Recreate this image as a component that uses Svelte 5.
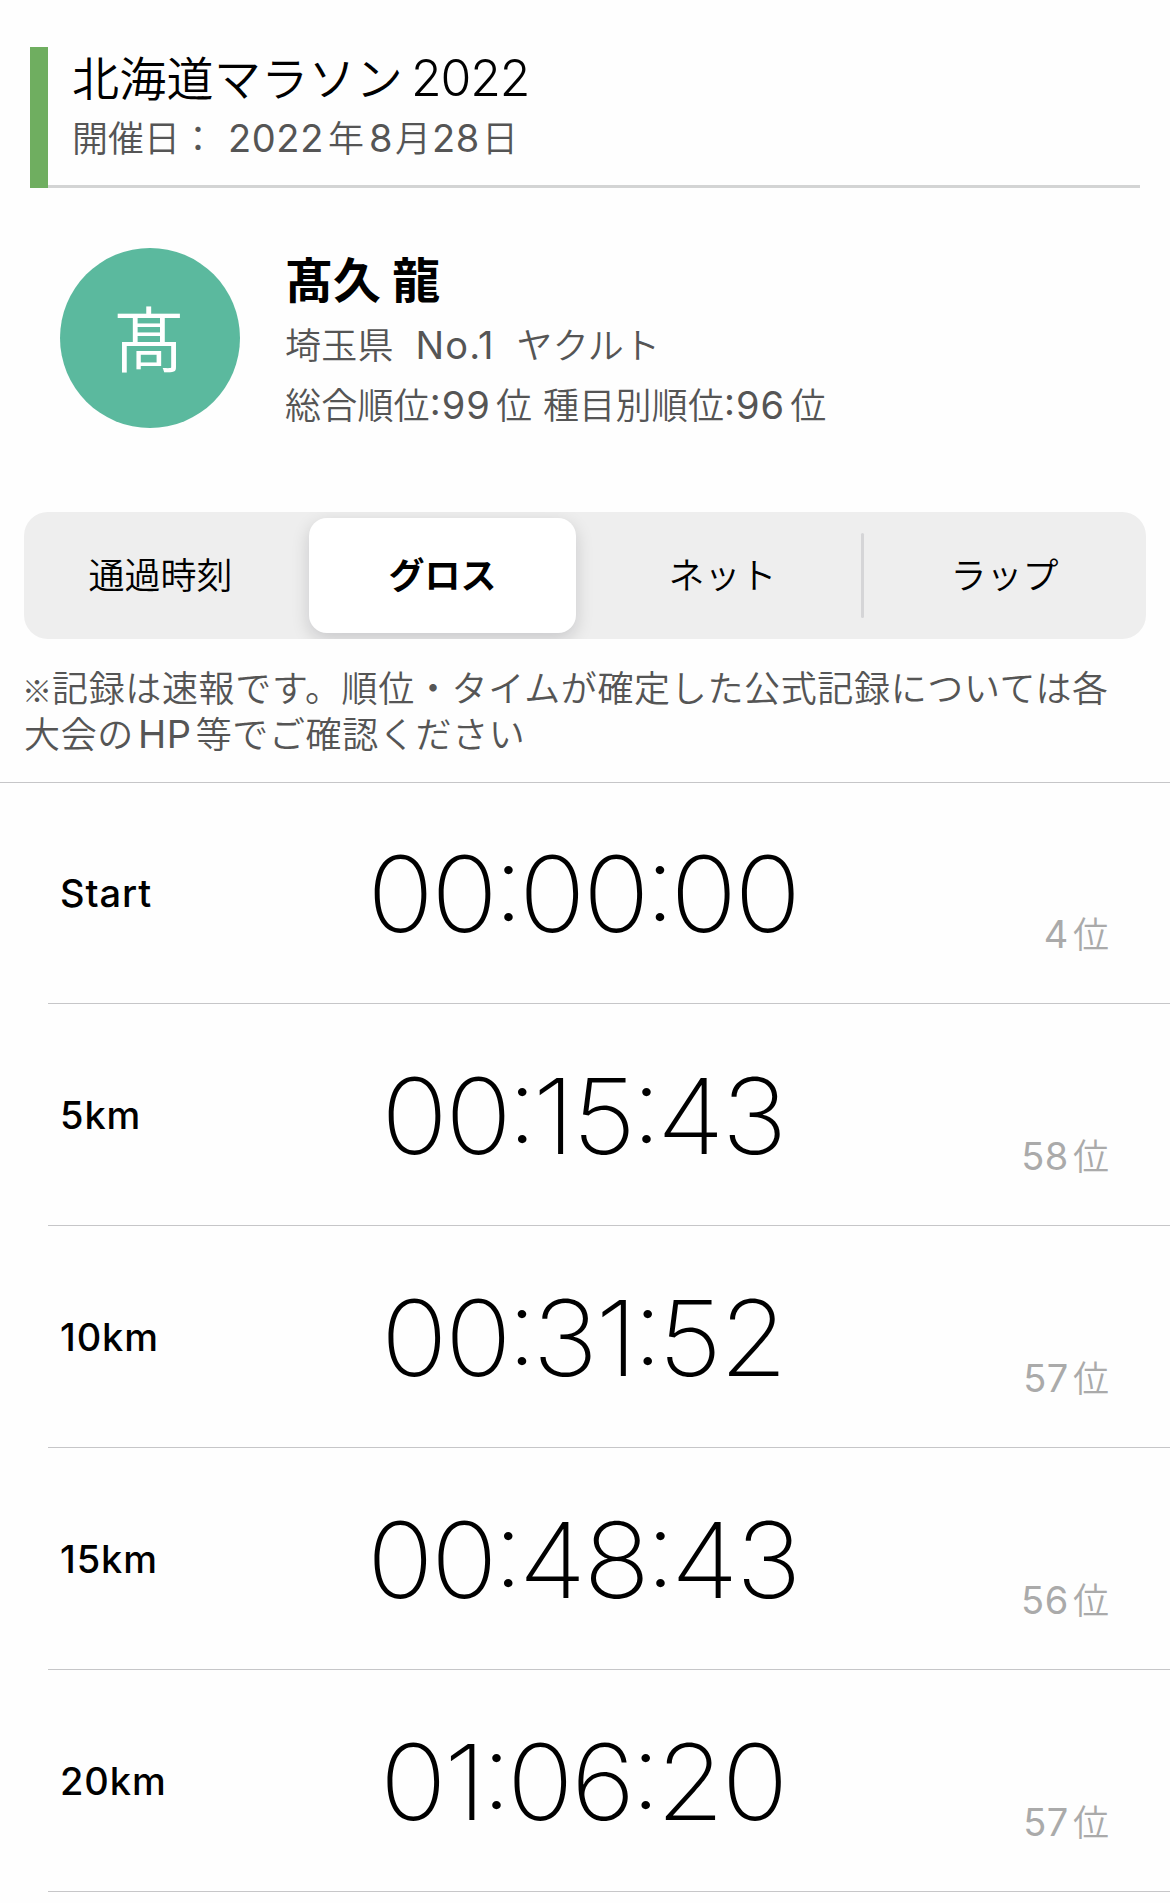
<script lang="ts">
  type Split = {
    point: string;
    time: string;
    rank: number;
  };

  const tabs = ['通過時刻', 'グロス', 'ネット', 'ラップ'];
  let selected = $state(1);

  const splits: Split[] = [
    { point: 'Start', time: '00:00:00', rank: 4 },
    { point: '5km', time: '00:15:43', rank: 58 },
    { point: '10km', time: '00:31:52', rank: 57 },
    { point: '15km', time: '00:48:43', rank: 56 },
    { point: '20km', time: '01:06:20', rank: 57 }
  ];

  // a divider only shows between two unselected tabs
  function hasDivider(i: number) {
    return i !== selected && i - 1 !== selected;
  }
</script>

<div class="page">
  <header class="event">
    <h1>北海道マラソン<span class="num">2022</span></h1>
    <p class="event-date">開催日：<span class="num year">2022</span>年<span class="num month">8</span>月<span class="num day">28</span>日</p>
  </header>

  <section class="runner">
    <div class="avatar">髙</div>
    <div class="runner-info">
      <h2>髙久 龍</h2>
      <p>埼玉県<span class="num bib">No.1</span>ヤクルト</p>
      <p>総合順位<span class="num place">:99</span>位<span class="gap"></span>種目別順位<span class="num place">:96</span>位</p>
    </div>
  </section>

  <div class="tabs" role="tablist">
    {#each tabs as tab, i}
      {#if i > 0}
        <span class="divider" class:visible={hasDivider(i)}></span>
      {/if}
      <button class="tab" class:active={selected === i} role="tab" aria-selected={selected === i} onclick={() => (selected = i)}>
        {tab}
      </button>
    {/each}
  </div>

  <p class="note">
    <span class="mark">※</span>記録は速報です。順位・タイムが確定した公式記録については各<br />大会の<span class="num hp">HP</span>等でご確認ください
  </p>

  <ul class="splits">
    {#each splits as split}
      <li class="split">
        <span class="point">{split.point}</span>
        <span class="time">
          {#each split.time.split(':') as part, i}{#if i > 0}<span class="colon">:</span>{/if}{part}{/each}
        </span>
        <span class="rank"><span class="num">{split.rank}</span>位</span>
      </li>
    {/each}
  </ul>
</div>

<style>
:global(body) { margin: 0; background: #fefefe; }
.page {
  width: 1170px; height: 1903px; overflow: hidden; box-sizing: border-box;
  padding-top: 47px; background: #fefefe; color: #000;
  font-family: Inter, "Noto Sans CJK JP", sans-serif; font-weight: 350;
}
h1, h2, p, ul { margin: 0; padding: 0; }

/* Event header */
.event {
  box-sizing: border-box; height: 141px; margin: 0 30px;
  padding: 0 0 0 24px; border-left: 18px solid #6fae60;
  background: linear-gradient(#d3d4d4, #d3d4d4) bottom / 100% 3px no-repeat;
}
h1 { font-size: 47px; line-height: 63px; font-weight: 350; letter-spacing: .3px; white-space: nowrap; }
.event-date { font-size: 36px; line-height: 58px; color: #555; white-space: nowrap; }
.num { font-size: 38px; font-weight: 400; line-height: 1; letter-spacing: .6px; }
h1 .num { margin-left: 8px; font-size: 50px; font-weight: 270; letter-spacing: -1.2px; }
.year { margin: 0 4px 0 12px; }
.month { margin: 0 2px 0 5px; }
.day { margin: 0 2px 0 1px; }

/* Runner */
.runner { display: flex; align-items: flex-start; gap: 45px; padding: 60px 60px 0; height: 264px; }
.avatar {
  display: flex; align-items: center; justify-content: center;
  box-sizing: border-box; width: 180px; height: 180px; padding: 5px 2px 0 0; border-radius: 50%;
  background: #5bb99e; color: #fff; font-size: 71px; line-height: 1;
}
.runner-info { font-size: 36px; line-height: 60px; letter-spacing: .2px; color: #555; white-space: nowrap; }
h2 { margin-bottom: 3px; font-size: 48px; line-height: 65px; font-weight: 700; letter-spacing: 0; color: #000; }
.bib { margin: 0 22px; letter-spacing: 1.1px; }
.place { margin-right: 5px; letter-spacing: 1px; font-feature-settings: "case"; }
.gap { display: inline-block; width: 11px; }

/* Segmented control */
.tabs {
  display: flex; box-sizing: border-box; height: 127px;
  margin: 0 24px; padding: 6px 3px; overflow: hidden;
  border-radius: 24px; background: #eee;
}
.tab {
  flex: none; width: 267px; padding: 0 0 5px; border: none; border-radius: 18px;
  background: none; color: #000; font: inherit; font-size: 36px; cursor: pointer;
}
.tab.active {
  background: #fff; font-weight: 700;
  box-shadow: 0 6px 18px rgba(0, 0, 20, .16);
}
.divider { flex: none; width: 3px; margin: 15px 7px 15px 5px; border-radius: 2px; }
.divider.visible { background: #d5d5d7; }
.active + .divider { margin-left: 3px; }

.note {
  height: 144px; box-sizing: border-box; padding: 27px 0 0 24px;
  border-bottom: 1px solid #c6c6c8; color: #555;
  font-size: 36px; line-height: 46px; letter-spacing: .65px; white-space: nowrap;
}
.mark {
  display: inline-block; width: 30px; margin-left: -2px;
  font-family: "Noto Sans CJK JP", sans-serif; font-size: 30px; font-weight: 900; line-height: 1;
}
.hp { margin: 0 4px; }

/* Split times */
.splits { list-style: none; }
.split {
  display: grid; grid-template-columns: 262px 1fr 262px; align-items: center;
  height: 221px; margin-left: 48px; padding: 0 61px 0 12px;
  border-bottom: 1px solid #c6c6c8;
}
.split:first-child { height: 220px; }
.point { font-size: 38px; font-weight: 500; letter-spacing: .9px; }
.time {
  padding: 1px 3px 0 0; font-size: 105px; font-weight: 200; line-height: 1; letter-spacing: -2.5px;
  text-align: center; white-space: nowrap; transform: scaleX(1.05);
}
.colon { margin: 0 -2px; font-feature-settings: "case"; }
.rank { padding-top: 82px; font-size: 36px; line-height: 1; text-align: right; color: #aaa; }
.rank .num { margin-right: 4px; }
</style>
